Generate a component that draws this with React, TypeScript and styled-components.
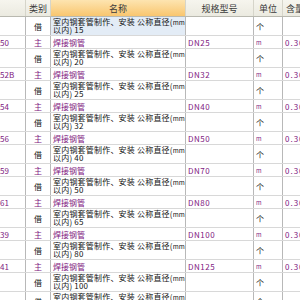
import styled, { createGlobalStyle } from 'styled-components';

const GlobalStyle = createGlobalStyle`
  html, body {
    margin: 0;
    padding: 0;
    background: #ffffff;
  }
`;

const COLS = '26px 25px 135px 68px 29px 60px';

const Frame = styled.div`
  width: 300px;
  height: 300px;
  overflow: hidden;
  background: #ffffff;
  font-family: 'Noto Sans CJK SC', 'DejaVu Sans', sans-serif;
  font-size: 8px;
  color: #111;
`;

const HeaderRow = styled.div`
  display: grid;
  grid-template-columns: ${COLS};
  height: 17px;
  border-bottom: 1px solid #b9b9b0;
  box-sizing: border-box;
`;

const HeadCell = styled.div<{ active?: boolean; align?: string }>`
  display: flex;
  align-items: center;
  justify-content: ${props => props.align || 'center'};
  padding: 0 3px;
  font-size: 9px;
  color: #3a3a3a;
  border-right: 1px solid #d6d5ca;
  background: ${props => (props.active ? 'linear-gradient(#fde4b0, #f9c66f)' : 'linear-gradient(#f6f5ee, #ebeae0)')};
  box-sizing: border-box;
  white-space: nowrap;
  overflow: hidden;
`;

const Row = styled.div<{ kind: 'main' | 'borrow' }>`
  display: grid;
  grid-template-columns: ${COLS};
  height: ${props => (props.kind === 'main' ? '13px' : '19px')};
  border-bottom: 1px solid #d8d8d8;
  box-sizing: border-box;
  color: ${props => (props.kind === 'main' ? '#80207f' : '#111')};
`;

const Cell = styled.div<{ align?: string; selected?: boolean }>`
  display: flex;
  align-items: center;
  justify-content: ${props => props.align || 'flex-start'};
  padding: 0 2px;
  border-right: 1px solid #b8b8b8;
  background: ${props => (props.selected ? '#e3ecf6' : 'transparent')};
  white-space: nowrap;
  overflow: hidden;
  box-sizing: border-box;
  line-height: 11px;
`;

const NameBlock = styled.div`
  display: flex;
  flex-direction: column;
  line-height: 8.5px;
  font-size: 8px;
  letter-spacing: 0.2px;
`;

const Mm = styled.span`
  font-size: 6.5px;
  letter-spacing: 0;
`;

const Code = styled.span`
  margin-left: -2px;
`;

const Qty = styled.span`
  letter-spacing: 1px;
`;

const Spec = styled.span`
  letter-spacing: 0.5px;
`;

const Unit = styled.span`
  font-size: 6px;
`;

interface Item {
  code: string;
  spec: string;
  size: string;
}

const items: Item[] = [
  { code: '50', spec: 'DN25', size: '20' },
  { code: '52B', spec: 'DN32', size: '25' },
  { code: '54', spec: 'DN40', size: '32' },
  { code: '56', spec: 'DN50', size: '40' },
  { code: '59', spec: 'DN70', size: '50' },
  { code: '61', spec: 'DN80', size: '65' },
  { code: '39', spec: 'DN100', size: '80' },
  { code: '41', spec: 'DN125', size: '100' },
];

function BorrowRow({ size, selected }: { size: string; selected?: boolean }) {
  return (
    <Row kind="borrow">
      <Cell />
      <Cell align="center">借</Cell>
      <Cell selected={selected}>
        <NameBlock>
          <span>
            室内钢套管制作、安装 公称直径(<Mm>mm</Mm>
          </span>
          <span>以内) {size}</span>
        </NameBlock>
      </Cell>
      <Cell />
      <Cell>个</Cell>
      <Cell />
    </Row>
  );
}

export default function App() {
  return (
    <Frame>
      <GlobalStyle />
      <HeaderRow>
        <HeadCell />
        <HeadCell>类别</HeadCell>
        <HeadCell active>名称</HeadCell>
        <HeadCell>规格型号</HeadCell>
        <HeadCell>单位</HeadCell>
        <HeadCell align="flex-start">含量</HeadCell>
      </HeaderRow>
      <BorrowRow size="15" selected />
      {items.map(item => (
        <div key={item.code}>
          <Row kind="main">
            <Cell>
              <Code>{item.code}</Code>
            </Cell>
            <Cell align="center">主</Cell>
            <Cell>焊接钢管</Cell>
            <Cell>
              <Spec>{item.spec}</Spec>
            </Cell>
            <Cell>
              <Unit>m</Unit>
            </Cell>
            <Cell>
              <Qty>0.30</Qty>
            </Cell>
          </Row>
          <BorrowRow size={item.size} />
        </div>
      ))}
      <BorrowRow size="125" />
    </Frame>
  );
}
